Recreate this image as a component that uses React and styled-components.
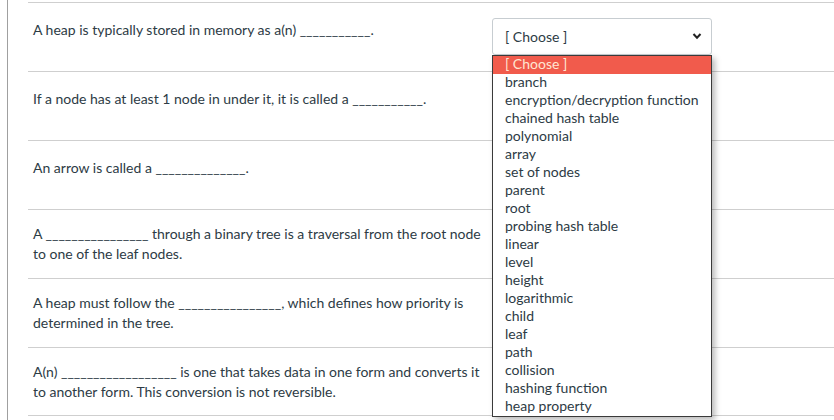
import React from "react";
import styled, { createGlobalStyle } from "styled-components";

const GlobalStyle = createGlobalStyle`
  html, body {
    margin: 0;
    padding: 0;
    background: #fff;
  }
  body {
    font-family: Lato, "Open Sans", sans-serif;
    color: #2d3b45;
  }
`;

const Page = styled.div`
  width: 834px;
  height: 420px;
  overflow: hidden;
  padding-left: 7px;
  box-sizing: border-box;
`;

const Panel = styled.div`
  border-left: 1px solid #a0a0a0;
  height: 420px;
  padding: 2px 0 0 20px;
  box-sizing: border-box;
`;

const Row = styled.div`
  display: grid;
  grid-template-columns: 452px 220px;
  column-gap: 7px;
  height: 69px;
  box-sizing: border-box;
  border-top: 1px solid #cfcfcf;
  padding-left: 5px;

  &:last-child {
    border-bottom: 1px solid #cfcfcf;
  }
`;

const Question = styled.div`
  font-size: 14px;
  line-height: 20px;
  padding-top: ${(p) => (p.$twoLine ? "14px" : "17px")};
`;

const SelectCell = styled.div`
  position: relative;
  padding-top: 15px;
`;

const SelectBox = styled.div`
  display: flex;
  align-items: center;
  justify-content: space-between;
  height: 37px;
  box-sizing: border-box;
  border: 1px solid #c7cdd1;
  border-radius: 3px;
  padding: 0 9px 1px 12px;
  font-size: 14px;
  background: #fff;
`;

const Chevron = styled.svg`
  width: 10px;
  height: 10px;
`;

const Listbox = styled.ul`
  position: absolute;
  top: 52px;
  left: 0;
  width: 220px;
  box-sizing: border-box;
  margin: 0;
  padding: 0;
  list-style: none;
  background: #fff;
  border: 1px solid #3a3a3a;
  box-shadow: 3px 3px 6px rgba(0, 0, 0, 0.28);
  z-index: 5;
`;

const Option = styled.li`
  height: 18px;
  line-height: 16px;
  font-size: 14px;
  padding-left: 12px;
  white-space: nowrap;
  background: ${(p) => (p.$active ? "#f15b4c" : "transparent")};
  color: ${(p) => (p.$active ? "#ffe6d2" : "#2d3b45")};
`;

const questions = [
  { text: "A heap is typically stored in memory as a(n) ___________." },
  { text: "If a node has at least 1 node in under it, it is called a ___________." },
  { text: "An arrow is called a ______________." },
  {
    text: "A ________________ through a binary tree is a traversal from the root node to one of the leaf nodes.",
    twoLine: true,
  },
  {
    text: "A heap must follow the ________________, which defines how priority is determined in the tree.",
    twoLine: true,
  },
  {
    text: "A(n) __________________ is one that takes data in one form and converts it to another form. This conversion is not reversible.",
    twoLine: true,
  },
];

const options = [
  "[ Choose ]",
  "branch",
  "encryption/decryption function",
  "chained hash table",
  "polynomial",
  "array",
  "set of nodes",
  "parent",
  "root",
  "probing hash table",
  "linear",
  "level",
  "height",
  "logarithmic",
  "child",
  "leaf",
  "path",
  "collision",
  "hashing function",
  "heap property",
];

export default function App() {
  return (
    <Page>
      <GlobalStyle />
      <Panel>
        {questions.map((q, i) => (
          <Row key={i}>
            <Question $twoLine={q.twoLine}>{q.text}</Question>
            <SelectCell>
              {i === 0 && (
                <>
                  <SelectBox>
                    <span>[ Choose ]</span>
                    <Chevron viewBox="0 0 10 10">
                      <path d="M1.5 3 L5 6.8 L8.5 3" fill="none" stroke="#222" strokeWidth="2" />
                    </Chevron>
                  </SelectBox>
                  <Listbox>
                    {options.map((o, j) => (
                      <Option key={o} $active={j === 0}>
                        {o}
                      </Option>
                    ))}
                  </Listbox>
                </>
              )}
            </SelectCell>
          </Row>
        ))}
      </Panel>
    </Page>
  );
}
